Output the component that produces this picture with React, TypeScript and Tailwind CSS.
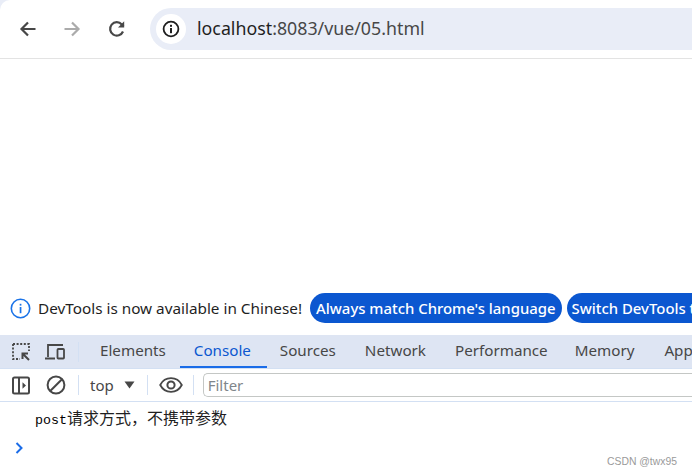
import React from "react";

const ui = "font-['Noto_Sans',sans-serif]";

function Sep({ className = "" }: { className?: string }) {
  return <div className={`shrink-0 w-px h-[20px] bg-[#d3e0f3] ${className}`} />;
}

export default function App() {
  return (
    <div className={`relative w-[692px] h-[476px] overflow-hidden bg-[#e9edf7] flex flex-col ${ui}`}>
      {/* Browser toolbar */}
      <div className="h-[59px] shrink-0 bg-white rounded-tl-[10px] border-b border-[#e3e3e3] flex items-start">
        <div className="w-[150px] h-[58px] flex items-center shrink-0">
          <svg className="ml-[19px] shrink-0" width="18" height="18" viewBox="0 0 18 18" fill="none" stroke="#474747" strokeWidth="2.2">
            <path d="M16.5 9H2.500M9 2.500 2.500 9 9 15.500" />
          </svg>
          <svg className="ml-[26px] shrink-0" width="18" height="18" viewBox="0 0 18 18" fill="none" stroke="#ababab" strokeWidth="2.2">
            <path d="M1.500 9h14M9 2.500 15.500 9 9 15.500" />
          </svg>
          <svg className="ml-[27px] shrink-0" width="18" height="18" viewBox="0 0 18 18" fill="none" stroke="#474747" strokeWidth="2.2">
            <path d="M15 11.500A6.700 6.700 0 1 1 13.800 4.400L15.500 6.300" />
            <path d="M16.200 1.200v6.200H10z" fill="#474747" stroke="none" />
          </svg>
        </div>
        <div className="mt-[8px] h-[42px] flex-1 bg-[#e9edf7] rounded-l-[21px] flex items-center pl-[6px]">
          <div className="w-[30px] h-[30px] rounded-full bg-white flex items-center justify-center shrink-0">
            <svg width="18" height="18" viewBox="0 0 18 18" fill="none">
              <circle cx="9" cy="9" r="7.400" stroke="#1f1f1f" strokeWidth="1.800" />
              <rect x="8" y="8" width="2" height="5.200" fill="#1f1f1f" />
              <rect x="8" y="4.800" width="2" height="2" fill="#1f1f1f" />
            </svg>
          </div>
          <span className="ml-[11px] text-[17.8px] leading-none text-[#1f1f1f] whitespace-nowrap">
            localhost<span className="text-[#474747]">:8083/vue/05.html</span>
          </span>
        </div>
      </div>

      {/* Blank page */}
      <div className="flex-1 bg-white" />

      {/* Infobar */}
      <div className="h-[50px] shrink-0 bg-white flex items-center pl-[10px] pb-[4px] whitespace-nowrap">
        <svg width="21" height="21" viewBox="0 0 21 21" fill="none" className="shrink-0">
          <circle cx="10.500" cy="10.500" r="9.200" stroke="#1a73e8" strokeWidth="1.600" />
          <rect x="9.700" y="9" width="1.700" height="6.200" fill="#1a73e8" />
          <rect x="9.700" y="5.800" width="1.700" height="1.800" fill="#1a73e8" />
        </svg>
        <span className="ml-[7px] shrink-0 text-[15.3px] text-[#1f1f1f]">DevTools is now available in Chinese!</span>
        <div className="ml-[8px] shrink-0 h-[30px] px-[6px] rounded-[15px] bg-[#0b57d0] text-white text-[14.9px] font-medium flex items-center">
          Always match Chrome's language
        </div>
        <div className="ml-[5px] shrink-0 h-[30px] pl-[5px] pr-[12px] rounded-[15px] bg-[#0b57d0] text-white text-[14.9px] font-medium flex items-center">
          Switch DevTools to Chinese
        </div>
      </div>

      {/* DevTools tabs */}
      <div className="h-[34px] shrink-0 bg-[#dee5f3] border-b border-[#d3e0f3] flex items-center whitespace-nowrap">
        <svg className="ml-[12px] shrink-0" width="18" height="18" viewBox="0 0 18 18" fill="none">
          <path d="M1 1h16v7M1 1v15h7" stroke="#474747" strokeWidth="1.800" strokeDasharray="2 1.600" />
          <path d="M17 17l-6-6M10.500 16v-5.500H16" stroke="#474747" strokeWidth="2" />
        </svg>
        <svg className="ml-[15px] shrink-0" width="20" height="17" viewBox="0 0 20 17" fill="none" stroke="#474747" strokeWidth="1.800">
          <path d="M3 14V2h15" />
          <path d="M0 15.500h10" strokeWidth="2" />
          <rect x="12.500" y="6" width="6.500" height="9.500" rx="0.800" fill="#dee5f3" />
        </svg>
        <Sep className="ml-[13px]" />
        <div className="flex items-center text-[15.2px] h-full text-[#474747] shrink-0">
          <div className="ml-[21px] pb-[2px]">Elements</div>
          <div className="ml-[14px] w-[87px] h-full flex items-center justify-center pb-[1px] pr-[2px] text-[#0b57d0] border-b-2 border-[#1a6ce8]">Console</div>
          <div className="ml-[13px] pb-[2px]">Sources</div>
          <div className="ml-[29px] pb-[2px]">Network</div>
          <div className="ml-[29px] pb-[2px]">Performance</div>
          <div className="ml-[27px] pb-[2px]">Memory</div>
          <div className="ml-[30px] pb-[2px]">Application</div>
        </div>
      </div>

      {/* Console toolbar */}
      <div className="h-[33px] shrink-0 bg-white border-b border-[#d3e0f3] flex items-center whitespace-nowrap">
        <svg className="ml-[12px] shrink-0" width="18" height="19" viewBox="0 0 18 19" fill="none">
          <rect x="1" y="1.500" width="16" height="16" rx="1.500" stroke="#474747" strokeWidth="2" />
          <rect x="6" y="2" width="2" height="15" fill="#474747" />
          <path d="M10.500 6.200v6.600l3.500-3.300z" fill="#474747" />
        </svg>
        <svg className="ml-[16px] shrink-0" width="20" height="20" viewBox="0 0 20 20" fill="none" stroke="#474747" strokeWidth="2">
          <circle cx="10" cy="10" r="8.400" />
          <path d="M4.200 16 16 4.200" />
        </svg>
        <Sep className="ml-[12px]" />
        <span className="ml-[11px] shrink-0 text-[15px] text-[#474747]">top</span>
        <svg className="ml-[10px] shrink-0" width="11" height="8" viewBox="0 0 11 8"><path d="M0.500 0.500h10L5.500 7.500z" fill="#474747" /></svg>
        <Sep className="ml-[12px]" />
        <svg className="ml-[11px] shrink-0" width="24" height="16" viewBox="0 0 24 16" fill="none" stroke="#474747" strokeWidth="1.800">
          <path d="M1.200 8C3.500 3.600 7.400 1.200 12 1.200S20.500 3.600 22.800 8C20.500 12.400 16.600 14.800 12 14.800S3.500 12.400 1.200 8Z" />
          <circle cx="12" cy="8" r="3.600" strokeWidth="2" />
        </svg>
        <Sep className="ml-[10px] w-[2px]" />
        <div className="ml-[9px] flex-1 h-[24px] rounded-l-[5px] border border-r-0 border-[#c4c7c5] flex items-center pl-[4px] text-[15px] text-[#80868b]">
          Filter
        </div>
      </div>

      {/* Console */}
      <div className="h-[74px] shrink-0 bg-white flex flex-col">
        <div className="pl-[35px] pt-[8px] h-[35px] text-[16px] leading-[20px] text-[#1f1f1f] font-['Liberation_Mono','Noto_Sans_CJK_SC',monospace] whitespace-nowrap">
          <span className="text-[13.33px] text-black">post</span>请求方式，不携带参数
        </div>
        <svg className="ml-[15px] mt-[5px]" width="8" height="12" viewBox="0 0 8 12" fill="none" stroke="#1a6ce8" strokeWidth="2">
          <path d="M1.500 1 6.500 6 1.500 11" />
        </svg>
      </div>

      {/* Watermark */}
      <div className="absolute right-[15px] bottom-[9px] text-[10.4px] leading-none text-[#9a9a9a] font-['Liberation_Sans',sans-serif]">
        CSDN @twx95
      </div>
    </div>
  );
}
